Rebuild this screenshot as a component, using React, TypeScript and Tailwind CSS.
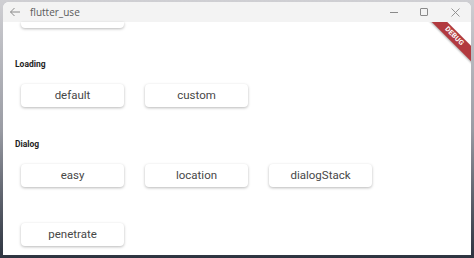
import React from "react"

function Btn({ label }: { label: string }) {
  return (
    <div className="flex h-[23px] w-[103px] items-center justify-center rounded-[4px] bg-white text-[11.5px] text-[#474747] shadow-[0_1px_3px_rgba(0,0,0,0.28)]">
      {label}
    </div>
  )
}

function Section({ title, children }: { title: string; children: React.ReactNode }) {
  return (
    <div className="flex flex-col">
      <div className="pl-[12px] text-[8.5px] font-bold leading-[11px] text-[#1e1e1e]">{title}</div>
      {children}
    </div>
  )
}

export default function App() {
  return (
    <div
      className="flex h-[258px] w-[474px] overflow-hidden bg-gradient-to-b from-[#cfcfd3] via-[#9a9ca4] to-[#2e3440] pl-[3px] pt-[2px]"
      style={{ fontFamily: "Roboto, 'Noto Sans', sans-serif" }}
    >
      <div className="flex h-[253px] w-[468px] flex-col overflow-hidden rounded-t-[6px] bg-white">
        {/* title bar */}
        <div className="flex h-[20px] shrink-0 items-center bg-[#f3f3f3] text-[#5a5a5a]">
          <svg className="ml-[6px]" width="12" height="12" viewBox="0 0 12 12" fill="none" stroke="#8a8a8a" strokeWidth="1">
            <path d="M11 6H1.5M5.5 2L1.5 6l4 4" />
          </svg>
          <span className="ml-[9px] text-[10px]" style={{ fontFamily: "'Open Sans', 'Noto Sans', sans-serif" }}>
            flutter_use
          </span>
          <div className="ml-auto flex h-full items-center">
            <div className="flex h-full w-[30px] items-center justify-center">
              <div className="h-px w-[8px] bg-[#8a8a8a]" />
            </div>
            <div className="flex h-full w-[30px] items-center justify-center">
              <div className="h-[8px] w-[8px] rounded-[1px] border border-[#8a8a8a]" />
            </div>
            <div className="flex h-full w-[32px] items-center justify-center">
              <svg width="9" height="9" viewBox="0 0 9 9" stroke="#8a8a8a" strokeWidth="0.9">
                <path d="M0.5 0.5l8 8M8.5 0.5l-8 8" />
              </svg>
            </div>
          </div>
        </div>

        {/* content */}
        <div className="relative flex flex-1 flex-col">
          <div className="ml-[18px] h-[6px] w-[103px] rounded-b-[4px] bg-white shadow-[0_1px_3px_rgba(0,0,0,0.28)]" />

          <div className="mt-[31px]">
            <Section title="Loading">
              <div className="mt-[14px] flex gap-[21px] pl-[18px]">
                <Btn label="default" />
                <Btn label="custom" />
              </div>
            </Section>
          </div>

          <div className="mt-[32px]">
            <Section title="Dialog">
              <div className="mt-[14px] flex gap-[21px] pl-[18px]">
                <Btn label="easy" />
                <Btn label="location" />
                <Btn label="dialogStack" />
              </div>
              <div className="mt-[36px] flex pl-[18px]">
                <Btn label="penetrate" />
              </div>
            </Section>
          </div>

          {/* debug banner */}
          <div className="pointer-events-none absolute right-0 top-0 h-[56px] w-[56px] overflow-hidden">
            <div className="absolute right-[-18px] top-[9px] flex h-[11px] w-[70px] rotate-45 items-center justify-center bg-[#b23a3f] text-[7px] font-bold tracking-[0.2px] text-white shadow-[0_1px_2px_rgba(0,0,0,0.3)]">
              DEBUG
            </div>
          </div>
        </div>
      </div>
    </div>
  )
}
